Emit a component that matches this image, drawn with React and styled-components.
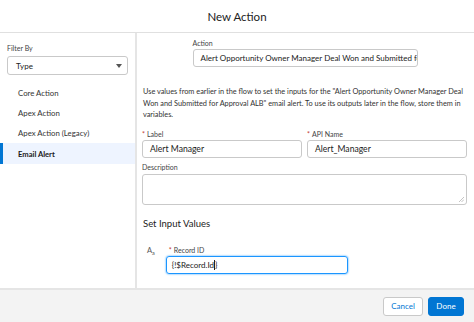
import React from "react";
import styled, { createGlobalStyle } from "styled-components";

const Global = createGlobalStyle`
	body {
		margin: 0;
		font-family: Lato, "Open Sans", sans-serif;
		color: #181818;
		background: #fff;
	}
`;

const Modal = styled.div`
	width: 474px;
	height: 322px;
	display: flex;
	flex-direction: column;
	overflow: hidden;
`;

const Header = styled.div`
	height: 31px;
	border-bottom: 1px solid #e0e0e0;
	display: flex;
	align-items: center;
	justify-content: center;
	font-size: 11.5px;
	color: #222;
	padding-top: 1px;
`;

const Body = styled.div`
	flex: 1;
	display: flex;
	min-height: 0;
`;

const Sidebar = styled.div`
	width: 135px;
	border-right: 2px solid #e5e5e5;
	padding-top: 10px;
	display: flex;
	flex-direction: column;
`;

const SmallLabel = styled.div`
	font-size: 7px;
	color: #444;
	line-height: 10px;
	padding-left: ${(p) => p.$indent || 0}px;
`;

const Select = styled.div`
	margin: 3px 7px 8px 7px;
	height: 17px;
	border: 1px solid #c9c9c9;
	border-radius: 3px;
	display: flex;
	align-items: center;
	justify-content: space-between;
	padding: 0 5px 0 8px;
	font-size: 8px;
	color: #222;
`;

const Caret = styled.span`
	width: 0;
	height: 0;
	border-left: 3px solid transparent;
	border-right: 3px solid transparent;
	border-top: 4px solid #555;
`;

const Item = styled.div`
	height: ${(p) => (p.$active ? 21 : 20)}px;
	display: flex;
	align-items: center;
	padding-left: 18px;
	font-size: ${(p) => (p.$active ? 7.6 : 7.8)}px;
	color: ${(p) => (p.$active ? "#181818" : "#333")};
	font-weight: ${(p) => (p.$active ? 700 : 400)};
	background: ${(p) => (p.$active ? "#eef4ff" : "transparent")};
	box-shadow: ${(p) => (p.$active ? "inset 3px 0 0 #0176d3" : "none")};
`;

const Main = styled.div`
	flex: 1;
	padding: 5px 6px 0 5px;
	display: flex;
	flex-direction: column;
`;

const ActionField = styled.div`
	width: 225px;
	align-self: center;
`;

const Input = styled.div`
	height: 16px;
	border: 1px solid ${(p) => (p.$focus ? "#1b96ff" : "#c9c9c9")};
	box-shadow: ${(p) => (p.$focus ? "0 0 2px #1b96ff" : "none")};
	border-radius: 3px;
	display: flex;
	align-items: center;
	padding-left: ${(p) => p.$pad || 7}px;
	font-size: ${(p) => p.$size || 8.6}px;
	color: #222;
	white-space: nowrap;
	overflow: hidden;
	margin-top: 1px;
`;

const Para = styled.p`
	margin: 19px 0 0 1px;
	font-size: 7.35px;
	line-height: 11.5px;
	color: #333;
`;

const Row = styled.div`
	display: grid;
	grid-template-columns: 1fr 1fr;
	gap: 5px;
	margin-top: 8px;
	margin-right: 1px;
`;

const Req = styled.span`
	color: #c23934;
	margin-right: 2px;
`;

const Field = styled.div`
	margin-top: ${(p) => p.$top || 0}px;
	margin-right: 1px;
`;

const Textarea = styled.div`
	height: 29px;
	border: 1px solid #c9c9c9;
	border-radius: 3px;
	margin-top: 2px;
	position: relative;
`;

const Grip = styled.svg`
	position: absolute;
	right: 2px;
	bottom: 2px;
`;

const Section = styled.div`
	font-size: 9.5px;
	color: #222;
	margin-top: 13px;
	padding-left: 1px;
`;

const InputRow = styled.div`
	display: flex;
	margin-top: 16px;
	padding-left: 5px;
	gap: 11px;
`;

const TypeIcon = styled.div`
	font-size: 7.5px;
	color: #555;
	padding-top: 1px;
	span {
		font-size: 5.5px;
		vertical-align: -2px;
	}
`;

const RecordField = styled.div`
	width: 182px;
`;

const Cursor = styled.span`
	display: inline-block;
	width: 1px;
	height: 10px;
	background: #222;
`;

const Footer = styled.div`
	height: 32px;
	background: #f3f3f3;
	border-top: 2px solid #e5e5e5;
	display: flex;
	align-items: center;
	justify-content: flex-end;
	gap: 5px;
	padding-right: 10px;
`;

const Button = styled.button`
	height: 19px;
	width: ${(p) => (p.$primary ? 36 : 40)}px;
	padding: 0;
	border-radius: 3px;
	font-family: inherit;
	font-size: 8px;
	border: 1px solid ${(p) => (p.$primary ? "#0176d3" : "#c9c9c9")};
	background: ${(p) => (p.$primary ? "#0176d3" : "#fff")};
	color: ${(p) => (p.$primary ? "#fff" : "#0176d3")};
`;

const items = ["Core Action", "Apex Action", "Apex Action (Legacy)", "Email Alert"];

export default function App() {
	return (
		<Modal>
			<Global />
			<Header>New Action</Header>
			<Body>
				<Sidebar>
					<SmallLabel $indent={7}>Filter By</SmallLabel>
					<Select>
						Type
						<Caret />
					</Select>
					{items.map((it) => (
						<Item key={it} $active={it === "Email Alert"}>
							{it}
						</Item>
					))}
				</Sidebar>
				<Main>
					<ActionField>
						<SmallLabel>Action</SmallLabel>
						<Input $size={8}>Alert Opportunity Owner Manager Deal Won and Submitted for Approval ALB</Input>
					</ActionField>
					<Para>
						Use values from earlier in the flow to set the inputs for the "Alert Opportunity Owner Manager Deal
						Won and Submitted for Approval ALB" email alert. To use its outputs later in the flow, store them in
						variables.
					</Para>
					<Row>
						<div>
							<SmallLabel>
								<Req>*</Req>Label
							</SmallLabel>
							<Input>Alert Manager</Input>
						</div>
						<div>
							<SmallLabel>
								<Req>*</Req>API Name
							</SmallLabel>
							<Input>Alert_Manager</Input>
						</div>
					</Row>
					<Field $top={4}>
						<SmallLabel>Description</SmallLabel>
						<Textarea>
							<Grip width="5" height="5" viewBox="0 0 5 5">
								<path d="M5 0L0 5M5 2.5L2.5 5" stroke="#aaa" strokeWidth="0.7" />
							</Grip>
						</Textarea>
					</Field>
					<Section>Set Input Values</Section>
					<InputRow>
						<TypeIcon>
							A<span>a</span>
						</TypeIcon>
						<RecordField>
							<SmallLabel $indent={3}>
								<Req>*</Req>Record ID
							</SmallLabel>
							<Input $focus $pad={5} $size={8}>
								{"{!$Record.Id"}
								<Cursor />
								{"}"}
							</Input>
						</RecordField>
					</InputRow>
				</Main>
			</Body>
			<Footer>
				<Button>Cancel</Button>
				<Button $primary>Done</Button>
			</Footer>
		</Modal>
	);
}
